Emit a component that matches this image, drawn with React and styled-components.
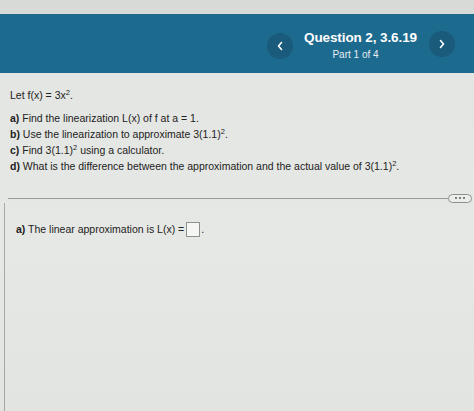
import React from "react";
import styled, { createGlobalStyle } from "styled-components";

const Global = createGlobalStyle`
  html, body { margin: 0; padding: 0; }
  body {
    width: 474px;
    height: 411px;
    overflow: hidden;
    background: #e2e4e1;
    font-family: "Liberation Sans", Arial, sans-serif;
  }
`;

const Page = styled.div`
  width: 474px;
  height: 411px;
  display: flex;
  flex-direction: column;
  background: linear-gradient(180deg, #e3e5e2 0%, #e6e8e5 60%, #e2e4e1 100%);
`;

const TopStrip = styled.div`
  height: 14px;
  background: #d7dad7;
  flex-shrink: 0;
`;

const Header = styled.header`
  height: 59px;
  flex-shrink: 0;
  background: #1d6a8f;
  display: flex;
  align-items: center;
  justify-content: flex-end;
  padding-right: 19px;
  box-sizing: border-box;
`;

const NavButton = styled.button`
  width: 26px;
  height: 26px;
  border-radius: 50%;
  border: none;
  padding: 0;
  background: #1a5a7a;
  display: flex;
  align-items: center;
  justify-content: center;
  margin-top: ${(p) => p.$offset || 0}px;
`;

const TitleBlock = styled.div`
  display: flex;
  flex-direction: column;
  align-items: center;
  margin: 4px 8px 0 11px;
  color: #ffffff;
  padding-right: 4px;
`;

const Title = styled.div`
  font-size: 13.5px;
  font-weight: 700;
  line-height: 16px;
  letter-spacing: -0.1px;
`;

const Subtitle = styled.div`
  font-size: 10px;
  line-height: 14px;
  margin-top: 2px;
  color: #e8eef2;
  margin-right: 10px;
`;

const Content = styled.section`
  padding: 14px 0 0 10px;
  color: #222222;
  font-size: 10.5px;
`;

const Line = styled.div`
  line-height: 16px;
  height: 16px;
  white-space: nowrap;
  margin-top: ${(p) => p.$gap || 0}px;
`;

const Label = styled.b`
  font-weight: 700;
`;

const Sup = styled.sup`
  font-size: 7.5px;
  vertical-align: 4px;
  line-height: 0;
`;

const DividerRow = styled.div`
  display: flex;
  align-items: center;
  height: 10px;
  margin-top: 19px;
  padding: 0 2px 0 8px;
`;

const Rule = styled.div`
  flex: 1;
  height: 1px;
  background: #9a9c99;
`;

const MorePill = styled.div`
  width: 24px;
  height: 9px;
  box-sizing: border-box;
  border: 1px solid #8e908d;
  border-radius: 5px;
  background: #eceeeb;
  display: flex;
  align-items: center;
  justify-content: center;
  gap: 2px;
`;

const Dot = styled.span`
  width: 2px;
  height: 2px;
  border-radius: 50%;
  background: #5a5c5a;
`;

const AnswerPanel = styled.section`
  flex: 1;
  margin-left: 4px;
  border-left: 1px solid #a6a8a5;
  padding: 18px 0 0 11px;
  color: #222222;
  font-size: 10.5px;
`;

const AnswerLine = styled.div`
  line-height: 16px;
  height: 16px;
  display: flex;
  align-items: center;
  white-space: pre;
`;

const AnswerBox = styled.span`
  display: inline-block;
  width: 14px;
  height: 15px;
  box-sizing: border-box;
  border: 1px solid #8f918e;
  background: #f6f7f5;
  margin-left: 2px;
  margin-right: 1px;
`;

const Chevron = ({ dir }) => (
  <svg width="8" height="10" viewBox="0 0 8 10">
    <path
      d={dir === "left" ? "M5.5 1.5 L2.5 5 L5.5 8.5" : "M2.5 1.5 L5.5 5 L2.5 8.5"}
      fill="none"
      stroke="#ffffff"
      strokeWidth="1.6"
      strokeLinecap="round"
      strokeLinejoin="round"
    />
  </svg>
);

export default function App() {
  return (
    <>
      <Global />
      <Page>
        <TopStrip />
        <Header>
          <NavButton $offset={4} aria-label="Previous">
            <Chevron dir="left" />
          </NavButton>
          <TitleBlock>
            <Title>Question 2, 3.6.19</Title>
            <Subtitle>Part 1 of 4</Subtitle>
          </TitleBlock>
          <NavButton $offset={1} aria-label="Next">
            <Chevron dir="right" />
          </NavButton>
        </Header>
        <Content>
          <Line>
            Let f(x) = 3x<Sup>2</Sup>.
          </Line>
          <Line $gap={7}>
            <Label>a)</Label> Find the linearization L(x) of f at a = 1.
          </Line>
          <Line>
            <Label>b)</Label> Use the linearization to approximate 3(1.1)<Sup>2</Sup>.
          </Line>
          <Line>
            <Label>c)</Label> Find 3(1.1)<Sup>2</Sup> using a calculator.
          </Line>
          <Line>
            <Label>d)</Label> What is the difference between the approximation and the actual value of 3(1.1)<Sup>2</Sup>.
          </Line>
        </Content>
        <DividerRow>
          <Rule />
          <MorePill>
            <Dot />
            <Dot />
            <Dot />
          </MorePill>
        </DividerRow>
        <AnswerPanel>
          <AnswerLine>
            <Label>a)</Label> The linear approximation is L(x) =<AnswerBox />.
          </AnswerLine>
        </AnswerPanel>
      </Page>
    </>
  );
}
